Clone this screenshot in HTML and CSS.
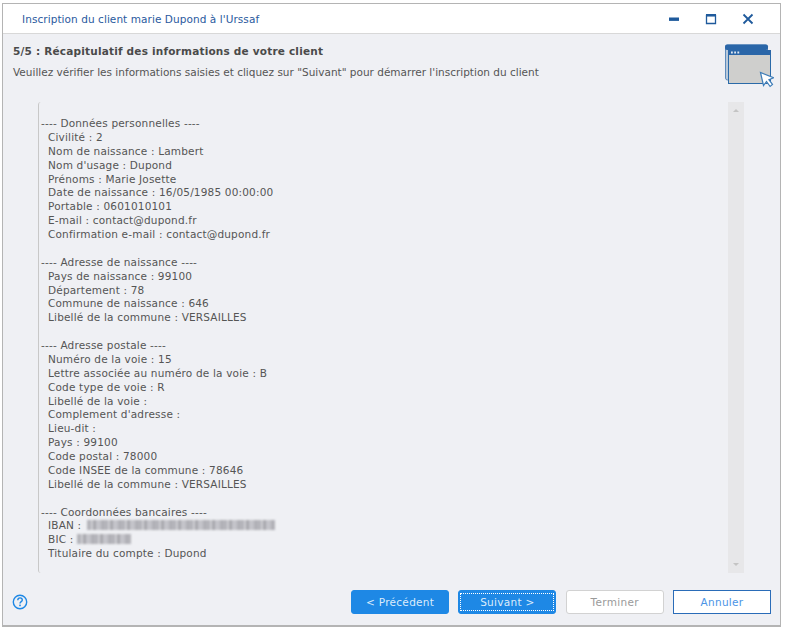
FILE: index.html
```html
<!DOCTYPE html>
<html lang="fr">
<head>
<meta charset="utf-8">
<title>Inscription</title>
<link rel="stylesheet" href="styles.css">
</head>
<body>
<div class="window">
  <header class="titlebar">
    <span class="title">Inscription du client marie Dupond à l'Urssaf</span>
    <div class="controls">
      <svg width="12" height="12" viewBox="0 0 12 12"><rect x="1" y="4.5" width="10" height="3.4" fill="#1f5a9c"/></svg>
      <svg width="12" height="12" viewBox="0 0 12 12"><path d="M1.5 2.5h9v8h-9z" fill="none" stroke="#1f5a9c" stroke-width="1.3"/><rect x="1" y="1" width="10" height="2.4" fill="#1f5a9c"/></svg>
      <svg width="12" height="12" viewBox="0 0 12 12"><path d="M1.5 1.5l9 9M10.5 1.5l-9 9" stroke="#1f5a9c" stroke-width="1.8" fill="none"/></svg>
    </div>
  </header>
  <main class="content">
    <div class="head">
      <div class="head-text">
        <h1>5/5 : Récapitulatif des informations de votre client</h1>
        <p>Veuillez vérifier les informations saisies et cliquez sur "Suivant" pour démarrer l'inscription du client</p>
      </div>
      <svg class="logo" width="49" height="44" viewBox="0 0 49 44">
        <rect x="0.5" y="1" width="42" height="35" rx="2" fill="#b9c9da" stroke="#5f8cbc"/>
        <rect x="0" y="0.5" width="43" height="5.5" rx="2" fill="#2a66a8"/>
        <rect x="3.5" y="6.5" width="42" height="33" fill="#cfcfcd" stroke="#2a6aa8"/>
        <rect x="3" y="6" width="43" height="5" fill="#2a66a8"/>
        <path d="M6 8.5h1.8M9.2 8.5h1.8M12.4 8.5h1.8" stroke="#dfe8f2" stroke-width="1.8"/>
        <path d="M35.5 28.5l3 13 3-4 3.6 5 2.4-2-3.6-4.8 4.6-2z" fill="#fff" stroke="#3e7db8" stroke-width="1.2"/>
      </svg>
    </div>
    <div class="summary">
      <div class="text">
        <div class="line">---- Données personnelles ----</div>
        <div class="line in">Civilité : 2</div>
        <div class="line in">Nom de naissance : Lambert</div>
        <div class="line in">Nom d'usage : Dupond</div>
        <div class="line in">Prénoms : Marie Josette</div>
        <div class="line in">Date de naissance : 16/05/1985 00:00:00</div>
        <div class="line in">Portable : 0601010101</div>
        <div class="line in">E-mail : contact@dupond.fr</div>
        <div class="line in">Confirmation e-mail : contact@dupond.fr</div>
        <div class="line">&nbsp;</div>
        <div class="line">---- Adresse de naissance ----</div>
        <div class="line in">Pays de naissance : 99100</div>
        <div class="line in">Département : 78</div>
        <div class="line in">Commune de naissance : 646</div>
        <div class="line in">Libellé de la commune : VERSAILLES</div>
        <div class="line">&nbsp;</div>
        <div class="line">---- Adresse postale ----</div>
        <div class="line in">Numéro de la voie : 15</div>
        <div class="line in">Lettre associée au numéro de la voie : B</div>
        <div class="line in">Code type de voie : R</div>
        <div class="line in">Libellé de la voie :</div>
        <div class="line in">Complement d'adresse :</div>
        <div class="line in">Lieu-dit :</div>
        <div class="line in">Pays : 99100</div>
        <div class="line in">Code postal : 78000</div>
        <div class="line in">Code INSEE de la commune : 78646</div>
        <div class="line in">Libellé de la commune : VERSAILLES</div>
        <div class="line">&nbsp;</div>
        <div class="line">---- Coordonnées bancaires ----</div>
        <div class="line in">IBAN : <span class="blur iban"></span></div>
        <div class="line in">BIC : <span class="blur bic"></span></div>
        <div class="line in">Titulaire du compte : Dupond</div>
      </div>
      <div class="scrollbar">
        <span class="up"></span>
        <span class="down"></span>
      </div>
    </div>
    <footer class="footer">
      <svg class="help" width="16" height="16" viewBox="0 0 16 16"><circle cx="8" cy="8" r="6.7" fill="none" stroke="#1e88e5" stroke-width="1.4"/><path d="M5.8 6.2c0-3 4.5-3 4.5-.3 0 1.7-2.3 1.7-2.3 3.5" fill="none" stroke="#1e88e5" stroke-width="1.4"/><rect x="7.2" y="10.6" width="1.6" height="1.6" fill="#1e88e5"/></svg>
      <div class="buttons">
        <button class="btn primary">&lt; Précédent</button>
        <button class="btn primary focus"><span>Suivant &gt;</span></button>
        <button class="btn disabled">Terminer</button>
        <button class="btn cancel">Annuler</button>
      </div>
    </footer>
  </main>
</div>
</body>
</html>
```
FILE: styles.css
```css
html, body { margin: 0; padding: 0; background: #fff; }
body { width: 786px; height: 632px; padding: 3px 5px 5px 2px; box-sizing: border-box; font-family: "DejaVu Sans", sans-serif; font-size: 10.5px; color: #555; }
.window { height: 100%; box-sizing: border-box; border: 1px solid #b4b4b4; border-bottom-width: 2px; display: flex; flex-direction: column; background: #eff0f4; }
.titlebar { height: 29px; flex: none; background: #fff; border-bottom: 1px solid #d8d8d8; display: flex; align-items: center; justify-content: space-between; padding-left: 19px; }
.title { color: #2a5a9e; letter-spacing: 0.07px; }
.controls { display: flex; gap: 25px; padding-right: 26px; }
.content { flex: 1; display: flex; flex-direction: column; min-height: 0; padding: 0 9px 0 10px; }
.head { height: 68px; flex: none; display: flex; justify-content: space-between; padding-top: 8px; box-sizing: border-box; }
.head-text h1 { margin: 0; font-size: 10.5px; line-height: 18px; font-weight: 700; color: #4a4a4a; letter-spacing: 0.2px; }
.head-text p { margin: 3px 0 0; line-height: 18px; }
.logo { margin: 2px -3px 0 0; }
.summary { height: 471px; flex: none; display: flex; justify-content: space-between; padding-left: 25px; padding-right: 27px; }
.text { border-left: 1px solid #c8c8c8; border-radius: 3px 0 0 3px; padding: 15px 0 0 2px; flex: 1; }
.line { line-height: 13.87px; white-space: pre; letter-spacing: 0.18px; }
.in { padding-left: 7px; }
.blur { display: inline-block; height: 10px; vertical-align: -1px; filter: blur(1.2px); background: repeating-linear-gradient(90deg, #b4b4ba 0 4px, #cfcfd4 4px 6px, #a8a8ae 6px 9px, #c4c4ca 9px 14px, #b0b0b6 14px 17px); }
.iban { width: 188px; margin-left: 2px; }
.bic { width: 54px; }
.scrollbar { width: 16px; flex: none; background: #e7e7e9; display: flex; flex-direction: column; justify-content: space-between; align-items: center; padding: 7px 0; box-sizing: border-box; }
.up { width: 0; height: 0; border: 3px solid transparent; border-top: 0; border-bottom: 3px solid #c4c4c4; }
.down { width: 0; height: 0; border: 3px solid transparent; border-bottom: 0; border-top: 3px solid #c4c4c4; }
.footer { flex: 1; display: flex; align-items: center; justify-content: space-between; padding-top: 6px; padding-right: 0; }
.help { margin-left: -1px; }
.buttons { display: flex; gap: 9.3px; }
.btn { width: 98px; height: 24px; box-sizing: border-box; font: inherit; letter-spacing: 0.3px; border-radius: 3px; padding: 0; background: #fff; }
.primary { background: #1e88e5; color: #dcecfb; border: 1px solid #1e88e5; }
.focus span { display: block; margin: 2px; line-height: 16px; outline: 1px dotted #fff; }
.disabled { color: #9a9a9a; border: 1px solid #d2d2d2; }
.cancel { color: #4b94e6; border: 1px solid #2a6cb8; border-radius: 0; }
```
